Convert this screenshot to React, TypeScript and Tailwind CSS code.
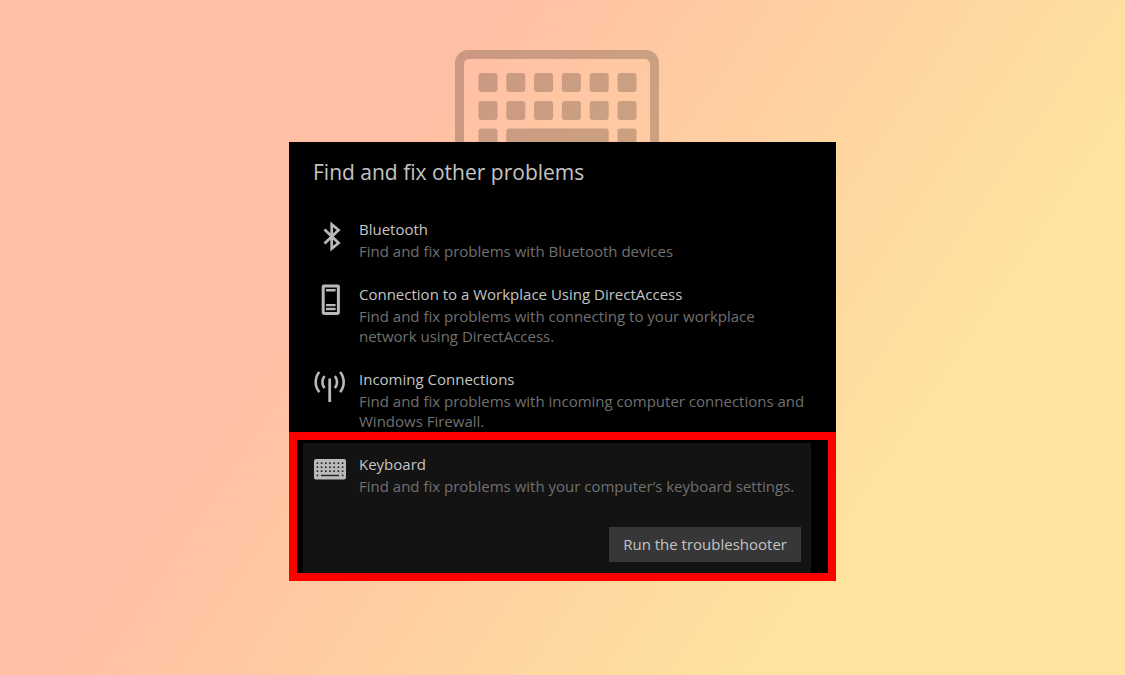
import type { ReactNode } from 'react';

const BluetoothIcon = () => (
  <svg viewBox="0 0 34 34" className="w-[34px] h-[34px]" fill="none" stroke="currentColor" strokeWidth="2.7" aria-hidden="true">
    <path d="M11.5 11.5 25.6 25l-6.9 5.6V6.4l6.9 5.6L11.5 25.5" />
  </svg>
);

const DeviceIcon = () => (
  <svg viewBox="0 0 34 34" className="w-[34px] h-[34px]" fill="none" stroke="currentColor" aria-hidden="true">
    <rect x="10.2" y="3" width="15.2" height="27.4" rx="0.6" strokeWidth="3" />
    <path d="M13 7.3h9.6M13 22.1h9.6M13 26h9.6" strokeWidth="2.4" />
  </svg>
);

const AntennaIcon = () => (
  <svg viewBox="0 0 34 34" className="w-[34px] h-[34px]" fill="none" stroke="currentColor" strokeWidth="2.6" aria-hidden="true">
    <path d="M16.7 10.5V34" strokeWidth="2.8" />
    <path d="M11.6 8.2c-3 3-3 8.6 0 11.8M6.3 4c-4.8 5.8-4.8 14.4 0 20.2" />
    <path d="M21.8 8.2c3 3 3 8.6 0 11.8M27.1 4c4.8 5.8 4.8 14.4 0 20.2" />
  </svg>
);

const KeyboardIcon = () => (
  <svg viewBox="0 0 34 34" className="w-[34px] h-[34px]" aria-hidden="true">
    <rect x="1" y="6" width="32" height="20.5" rx="2" fill="currentColor" />
    <g fill="#222222">
      {[9.4, 13.4, 17.4].map((y) =>
        [0, 1, 2, 3, 4, 5, 6].map((col) => (
          <rect key={`${y}-${col}`} x={3.6 + col * 4.2} y={y} width="1.6" height="1.6" />
        ))
      )}
      <rect x="3.6" y="21.6" width="1.6" height="1.6" />
      <rect x="8" y="21.8" width="18" height="1.4" />
      <rect x="28.8" y="21.6" width="1.6" height="1.6" />
    </g>
  </svg>
);

// Only the upper half shows above the panel
const KeyboardWatermark = () => (
  <svg viewBox="0 0 204 92" className="block w-[204px] h-[92px]" aria-hidden="true">
    <g fill="#000000" opacity="0.2">
      <path d="M13 0h178a13 13 0 0 1 13 13v79h-9V14a5 5 0 0 0-5-5H14a5 5 0 0 0-5 5v78H0V13A13 13 0 0 1 13 0z" />
      {[23, 51].map((y) =>
        [0, 1, 2, 3, 4, 5].map((col) => (
          <rect key={`${y}-${col}`} x={23.5 + col * 27.8} y={y} width="19" height="19" rx="3" />
        ))
      )}
      <rect x="23.5" y="78.5" width="19" height="19" rx="3" />
      <rect x="51.3" y="78.5" width="102.4" height="19" rx="3" />
      <rect x="162.5" y="78.5" width="19" height="19" rx="3" />
    </g>
  </svg>
);

const PROBLEMS = [
  {
    id: 'bluetooth',
    title: 'Bluetooth',
    description: 'Find and fix problems with Bluetooth devices',
    icon: <BluetoothIcon />,
  },
  {
    id: 'directaccess',
    title: 'Connection to a Workplace Using DirectAccess',
    description: 'Find and fix problems with connecting to your workplace network using DirectAccess.',
    icon: <DeviceIcon />,
  },
  {
    id: 'incoming',
    title: 'Incoming Connections',
    description: 'Find and fix problems with incoming computer connections and Windows Firewall.',
    icon: <AntennaIcon />,
  },
];

type ProblemProps = {
  title: string;
  description: string;
  icon: ReactNode;
};

function Problem({ title, description, icon }: ProblemProps) {
  return (
    <div className="flex gap-3 text-[#b9b9b9]">
      <div className="shrink-0">{icon}</div>
      <div className="flex flex-col gap-px">
        <h3 className="text-[15px] leading-[22px] text-[#c4c4c4]">{title}</h3>
        <p className="text-[15px] leading-5 text-[#707070]">{description}</p>
      </div>
    </div>
  );
}

export default function App() {
  return (
    <main className="min-h-screen pt-[50px] pb-12 bg-[linear-gradient(124deg,#ffbfa5_31%,#ffe39e_77%)] font-['Open_Sans','Noto_Sans',sans-serif]">
      <div className="w-full max-w-[547px] mx-auto">
        <div className="flex justify-center pr-3">
          <KeyboardWatermark />
        </div>

        <section className="bg-black">
          <div className="pt-[14px] pb-px pl-6 pr-7">
            <h2 className="text-[21px] leading-8 text-[#c4c4c4]">Find and fix other problems</h2>
            <ul className="mt-[30px] flex flex-col gap-[22px]">
              {PROBLEMS.map((problem) => (
                <li key={problem.id}>
                  <Problem title={problem.title} description={problem.description} icon={problem.icon} />
                </li>
              ))}
            </ul>
          </div>

          {/* Highlighted troubleshooter */}
          <div className="border-8 border-[#ff0000] pt-[3px] pl-[6px] pr-[17px]">
            <div className="bg-[#131313] pt-[10px] px-[10px] pb-[11px]">
              <Problem
                title="Keyboard"
                description="Find and fix problems with your computer’s keyboard settings."
                icon={<KeyboardIcon />}
              />
              <div className="flex justify-end mt-[31px]">
                <button type="button" className="h-[35px] px-[14px] bg-[#373737] text-[15px] text-[#c4c4c4]">
                  Run the troubleshooter
                </button>
              </div>
            </div>
          </div>
        </section>
      </div>
    </main>
  );
}
